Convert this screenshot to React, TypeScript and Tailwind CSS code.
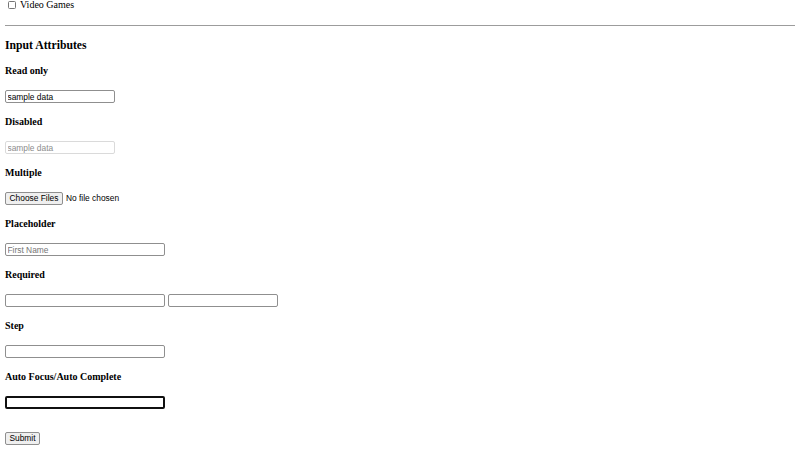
import type { ReactNode } from "react";

const field =
  "box-border h-[13px] rounded-[2px] border bg-white px-[1.5px] font-['Liberation_Sans',Arial,sans-serif] text-[8.4px] leading-[11px] outline-none";

function Section({ title, first, children }: { title: string; first?: boolean; children: ReactNode }) {
  return (
    <div className={first ? "mt-[13.3px]" : "mt-[13px]"}>
      <h4 className="text-[10px] font-bold leading-[11.5px]">{title}</h4>
      <div className="mt-[13.5px] flex h-[13px] items-center gap-[3px]">{children}</div>
    </div>
  );
}

export default function App() {
  return (
    <div className="min-h-[450px] overflow-hidden bg-white px-[5px] font-['Liberation_Serif','Times_New_Roman',serif] text-[10px] text-black">
      <label className="-mt-[1.1px] flex h-[11.5px] items-center">
        <span className="ml-[2.5px] mr-[4.5px] box-border block h-[8px] w-[8px] rounded-[1.5px] border border-[#767676] bg-white" />
        <span className="leading-[11.5px]">Video Games</span>
      </label>

      <div className="mt-[15px] h-0 border-t border-[#9c9c9c]" />

      <h3 className="mt-[12.2px] text-[11.7px] font-bold leading-[13.5px]">Input Attributes</h3>

      <Section title="Read only" first>
        <input readOnly defaultValue="sample data" className={`${field} w-[110px] border-[#8f8f8f] text-black`} />
      </Section>

      <Section title="Disabled">
        <input
          disabled
          defaultValue="sample data"
          className={`${field} w-[110px] border-[#dadada] bg-[#f9f9f9] text-[#8c8c8c]`}
        />
      </Section>

      <Section title="Multiple">
        <button
          type="button"
          className="box-border h-[13px] w-[58px] rounded-[2px] border border-[#8f8f8f] bg-[#efefef] font-['Liberation_Sans',Arial,sans-serif] text-[8.4px] leading-[11px] text-black"
        >
          Choose Files
        </button>
        <span className="font-['Liberation_Sans',Arial,sans-serif] text-[8.4px] leading-[11px]">No file chosen</span>
      </Section>

      <Section title="Placeholder">
        <input
          placeholder="First Name"
          className={`${field} w-[160px] border-[#8f8f8f] text-black placeholder:text-[#757575]`}
        />
      </Section>

      <Section title="Required">
        <input className={`${field} w-[160px] border-[#8f8f8f]`} />
        <input className={`${field} w-[110px] border-[#8f8f8f]`} />
      </Section>

      <Section title="Step">
        <input className={`${field} w-[160px] border-[#8f8f8f]`} />
      </Section>

      <Section title="Auto Focus/Auto Complete">
        <input className={`${field} w-[160px] rounded-[2.5px] border-2 border-[#101010]`} />
      </Section>

      <button
        type="button"
        className="mt-[22.5px] box-border block h-[13px] w-[35px] rounded-[2px] border border-[#8f8f8f] bg-[#efefef] font-['Liberation_Sans',Arial,sans-serif] text-[8.4px] leading-[11px] text-black"
      >
        Submit
      </button>
    </div>
  );
}
